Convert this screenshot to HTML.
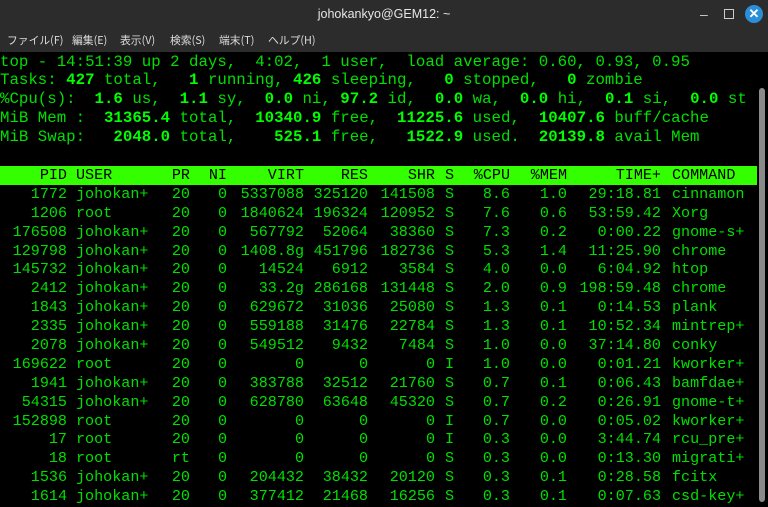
<!DOCTYPE html>
<html><head><meta charset="utf-8"><style>
*{margin:0;padding:0;box-sizing:border-box}
body{width:768px;height:507px;overflow:hidden;background:#000;position:relative;font-family:"Liberation Sans","Noto Sans CJK JP",sans-serif}
#title{position:absolute;left:0;top:0;width:768px;height:29px;background:#2c2c2c;color:#e6e6e6;font-size:12.5px;text-align:center;line-height:29px}
#menu{position:absolute;left:0;top:29px;width:768px;height:23px;background:#2c2c2c;color:#dcdcdc;font-size:10.8px;font-family:"Noto Sans CJK JP",sans-serif}
#menu span{position:absolute;top:3px}
.term{position:absolute;left:0;top:52.6px;width:757px;font-family:"Liberation Mono",monospace;font-size:15.1px;color:#00e000;}
.l{height:18.9px;line-height:18.9px;white-space:pre;position:relative}
.t{font-size:15.75px}
b{color:#00ff00;font-weight:bold}
.hdr{background:#33ff00;color:#000}
.c{position:absolute;top:0;white-space:pre}
.r{text-align:right}
#sb{position:absolute;left:759px;top:88px;width:6px;height:414px;background:#8a8a8a;border-radius:3px}
</style></head><body>
<div id="title">johokankyo@GEM12: ~
<span style="position:absolute;left:700px;top:0;font-size:14px;color:#ccc">–</span>
<span style="position:absolute;left:724px;top:9px;width:10px;height:10px;border:1.5px solid #ccc"></span>
<span style="position:absolute;left:745px;top:5px;width:18px;height:18px;border-radius:9px;background:#2a8fd8;color:#fff;font-size:13px;line-height:18px;text-align:center;font-weight:bold">✕</span>
</div>
<div id="menu">
<span style="left:7px">ファイル(F)</span><span style="left:72px">編集(E)</span><span style="left:120px">表示(V)</span><span style="left:170px">検索(S)</span><span style="left:219px">端末(T)</span><span style="left:268px">ヘルプ(H)</span>
</div>
<div class="term">
<div class="l t">top - 14:51:39 up 2 days,  4:02,  1 user,  load average: 0.60, 0.93, 0.95</div>
<div class="l t">Tasks: <b>427</b> total,   <b>1</b> running, <b>426</b> sleeping,   <b>0</b> stopped,   <b>0</b> zombie</div>
<div class="l t">%Cpu(s):  <b>1.6</b> us,  <b>1.1</b> sy,  <b>0.0</b> ni, <b>97.2</b> id,  <b>0.0</b> wa,  <b>0.0</b> hi,  <b>0.1</b> si,  <b>0.0</b> st</div>
<div class="l t">MiB Mem :  <b>31365.4</b> total,  <b>10340.9</b> free,  <b>11225.6</b> used,  <b>10407.6</b> buff/cache</div>
<div class="l t">MiB Swap:   <b>2048.0</b> total,    <b>525.1</b> free,   <b>1522.9</b> used.  <b>20139.8</b> avail Mem</div>
<div class="l"> </div>
<div id="rows"></div>
</div>
<div id="sb"></div>
<script>
var d=[["PID","USER","PR","NI","VIRT","RES","SHR","S","%CPU","%MEM","TIME+","COMMAND"],
["1772","johokan+","20","0","5337088","325120","141508","S","8.6","1.0","29:18.81","cinnamon"],
["1206","root","20","0","1840624","196324","120952","S","7.6","0.6","53:59.42","Xorg"],
["176508","johokan+","20","0","567792","52064","38360","S","7.3","0.2","0:00.22","gnome-s+"],
["129798","johokan+","20","0","1408.8g","451796","182736","S","5.3","1.4","11:25.90","chrome"],
["145732","johokan+","20","0","14524","6912","3584","S","4.0","0.0","6:04.92","htop"],
["2412","johokan+","20","0","33.2g","286168","131448","S","2.0","0.9","198:59.48","chrome"],
["1843","johokan+","20","0","629672","31036","25080","S","1.3","0.1","0:14.53","plank"],
["2335","johokan+","20","0","559188","31476","22784","S","1.3","0.1","10:52.34","mintrep+"],
["2078","johokan+","20","0","549512","9432","7484","S","1.0","0.0","37:14.80","conky"],
["169622","root","20","0","0","0","0","I","1.0","0.0","0:01.21","kworker+"],
["1941","johokan+","20","0","383788","32512","21760","S","0.7","0.1","0:06.43","bamfdae+"],
["54315","johokan+","20","0","628780","63648","45320","S","0.7","0.2","0:26.91","gnome-t+"],
["152898","root","20","0","0","0","0","I","0.7","0.0","0:05.02","kworker+"],
["17","root","20","0","0","0","0","I","0.3","0.0","3:44.74","rcu_pre+"],
["18","root","rt","0","0","0","0","S","0.3","0.0","0:13.30","migrati+"],
["1536","johokan+","20","0","204432","38432","20120","S","0.3","0.1","0:28.58","fcitx"],
["1614","johokan+","20","0","377412","21468","16256","S","0.3","0.1","0:07.63","csd-key+"]];
var cols=[[0,67,1],[76,90,0],[140,50,1],[195,32,1],[230,74,1],[304,64,1],[368,67,1],[445,20,0],[465,45,1],[510,57,1],[567,94,1],[672,85,0]];
var h="";
d.forEach(function(r,i){
 h+='<div class="l'+(i==0?' hdr':'')+'">';
 r.forEach(function(t,j){var c=cols[j];h+='<span class="c'+(c[2]?' r':'')+'" style="left:'+c[0]+'px;width:'+c[1]+'px">'+t+'</span>';});
 h+='</div>';
});
document.getElementById('rows').innerHTML=h;
</script>
</body></html>
